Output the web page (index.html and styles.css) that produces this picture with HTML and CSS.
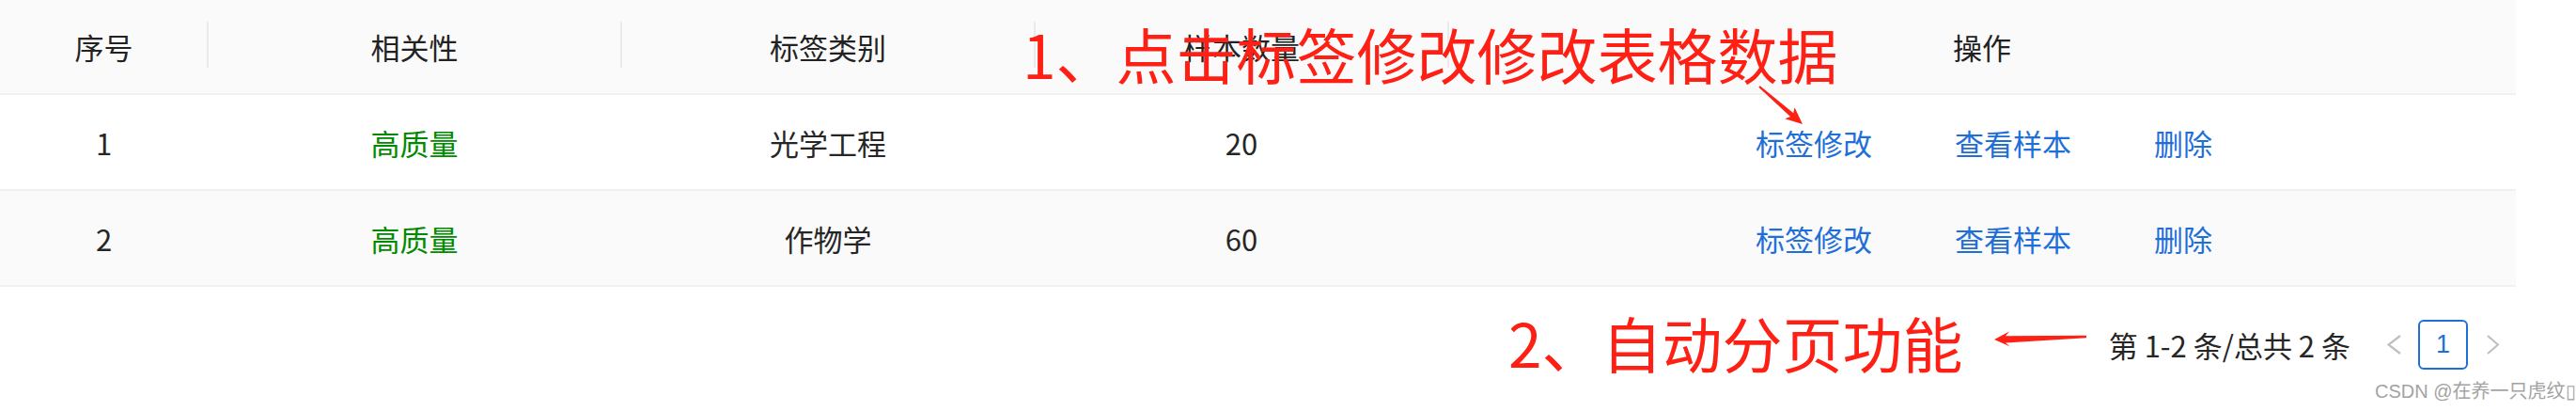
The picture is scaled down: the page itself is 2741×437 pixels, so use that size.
FILE: index.html
```html
<!DOCTYPE html>
<html lang="zh-CN">
<head>
<meta charset="utf-8">
<title>标签表格</title>
<link rel="stylesheet" href="styles.css">
</head>
<body>
<div class="page">
  <div class="table">
    <div class="row head">
      <div class="cell">序号</div>
      <div class="cell sep">相关性</div>
      <div class="cell sep">标签类别</div>
      <div class="cell sep">样本数量</div>
      <div class="cell sep">操作</div>
    </div>
    <div class="row">
      <div class="cell">1</div>
      <div class="cell good">高质量</div>
      <div class="cell">光学工程</div>
      <div class="cell">20</div>
      <div class="cell ops"><a class="link">标签修改</a><a class="link">查看样本</a><a class="link">删除</a></div>
    </div>
    <div class="row alt">
      <div class="cell">2</div>
      <div class="cell good">高质量</div>
      <div class="cell">作物学</div>
      <div class="cell">60</div>
      <div class="cell ops"><a class="link">标签修改</a><a class="link">查看样本</a><a class="link">删除</a></div>
    </div>
  </div>

  <div class="pager">
    <span class="total">第 1-2 条/总共 2 条</span>
    <span class="nav"><svg width="15" height="21" viewBox="0 0 15 21"><polyline points="14,1 1.5,10.5 14,20" fill="none" stroke="#bfbfbf" stroke-width="2.2"/></svg></span>
    <span class="pg">1</span>
    <span class="nav"><svg width="13" height="21" viewBox="0 0 13 21"><polyline points="1,1 12,10.5 1,20" fill="none" stroke="#bfbfbf" stroke-width="2.2"/></svg></span>
  </div>

  <div class="note note1">1、点击标签修改修改表格数据</div>
  <div class="note note2">2、自动分页功能</div>

  <svg class="arrows" width="2741" height="437" viewBox="0 0 2741 437">
    <polygon fill="#ff2015" points="1872.7,91.2 1908.3,120.3 1909.6,114.2 1918,132 1899.2,126.2 1905,124.1 1871.3,92.8"/>
    <polygon fill="#ff2015" points="2220,356.8 2134,357.2 2138,352.5 2122,361 2139,368.5 2134,364.4 2220,359.2"/>
  </svg>

  <div class="watermark">CSDN @在养一只虎纹▯</div>
</div>
</body>
</html>
```

FILE: styles.css
```css
html, body {
  margin: 0;
  padding: 0;
  background: #ffffff;
}

body {
  width: 2741px;
  height: 437px;
  overflow: hidden;
  font-family: "Noto Sans CJK SC", "Noto Sans", sans-serif;
  color: #262626;
}

.page {
  position: relative;
  width: 2677px;
  height: 437px;
}

.table {
  display: flex;
  flex-direction: column;
}

.row {
  display: grid;
  grid-template-columns: 221px 440px 440px 440px 1136px;
  height: 100px;
  border-bottom: 2px solid #f0f0f0;
  background: #ffffff;
}

.row.head {
  height: 99px;
  background: #fafafa;
}

.row.alt {
  background: #fafafa;
}

.cell {
  position: relative;
  display: flex;
  align-items: center;
  justify-content: center;
  font-size: 31px;
  line-height: 1;
}

.head .cell {
  font-weight: 400;
  color: #222222;
}

.head .sep::before {
  content: "";
  position: absolute;
  left: -1px;
  top: 23px;
  width: 2px;
  height: 49px;
  background: #ebebeb;
}

.good {
  color: #008a00;
}

.ops {
  gap: 88px;
  padding-left: 4px;
}

.link {
  color: #1f6fd9;
  cursor: pointer;
}

.pager {
  display: flex;
  justify-content: flex-end;
  align-items: center;
  margin-top: 35px;
  height: 53px;
  padding-right: 7px;
}

.total {
  font-size: 31px;
  line-height: 1;
  color: #262626;
  margin-right: 28px;
}

.nav {
  display: flex;
  align-items: center;
  justify-content: center;
  width: 36px;
  height: 53px;
}

.pg {
  display: flex;
  align-items: center;
  justify-content: center;
  box-sizing: border-box;
  width: 53px;
  height: 53px;
  margin: 0 8px;
  border: 2px solid #1f6fd9;
  border-radius: 6px;
  color: #1f6fd9;
  font-family: "Liberation Sans", Arial, sans-serif;
  font-size: 27px;
}

.note {
  position: absolute;
  font-family: "Noto Sans CJK SC", sans-serif;
  font-size: 64px;
  line-height: 64px;
  color: #ff2015;
  white-space: nowrap;
}

.note1 {
  left: 1088px;
  top: 24px;
}

.note2 {
  left: 1605px;
  top: 331px;
}

.arrows {
  position: absolute;
  left: 0;
  top: 0;
  pointer-events: none;
}

.watermark {
  position: absolute;
  left: 2527px;
  top: 404px;
  font-family: "Liberation Sans", "Noto Sans CJK SC", sans-serif;
  font-size: 20px;
  line-height: 24px;
  color: #a3a3a3;
  white-space: nowrap;
}
```
